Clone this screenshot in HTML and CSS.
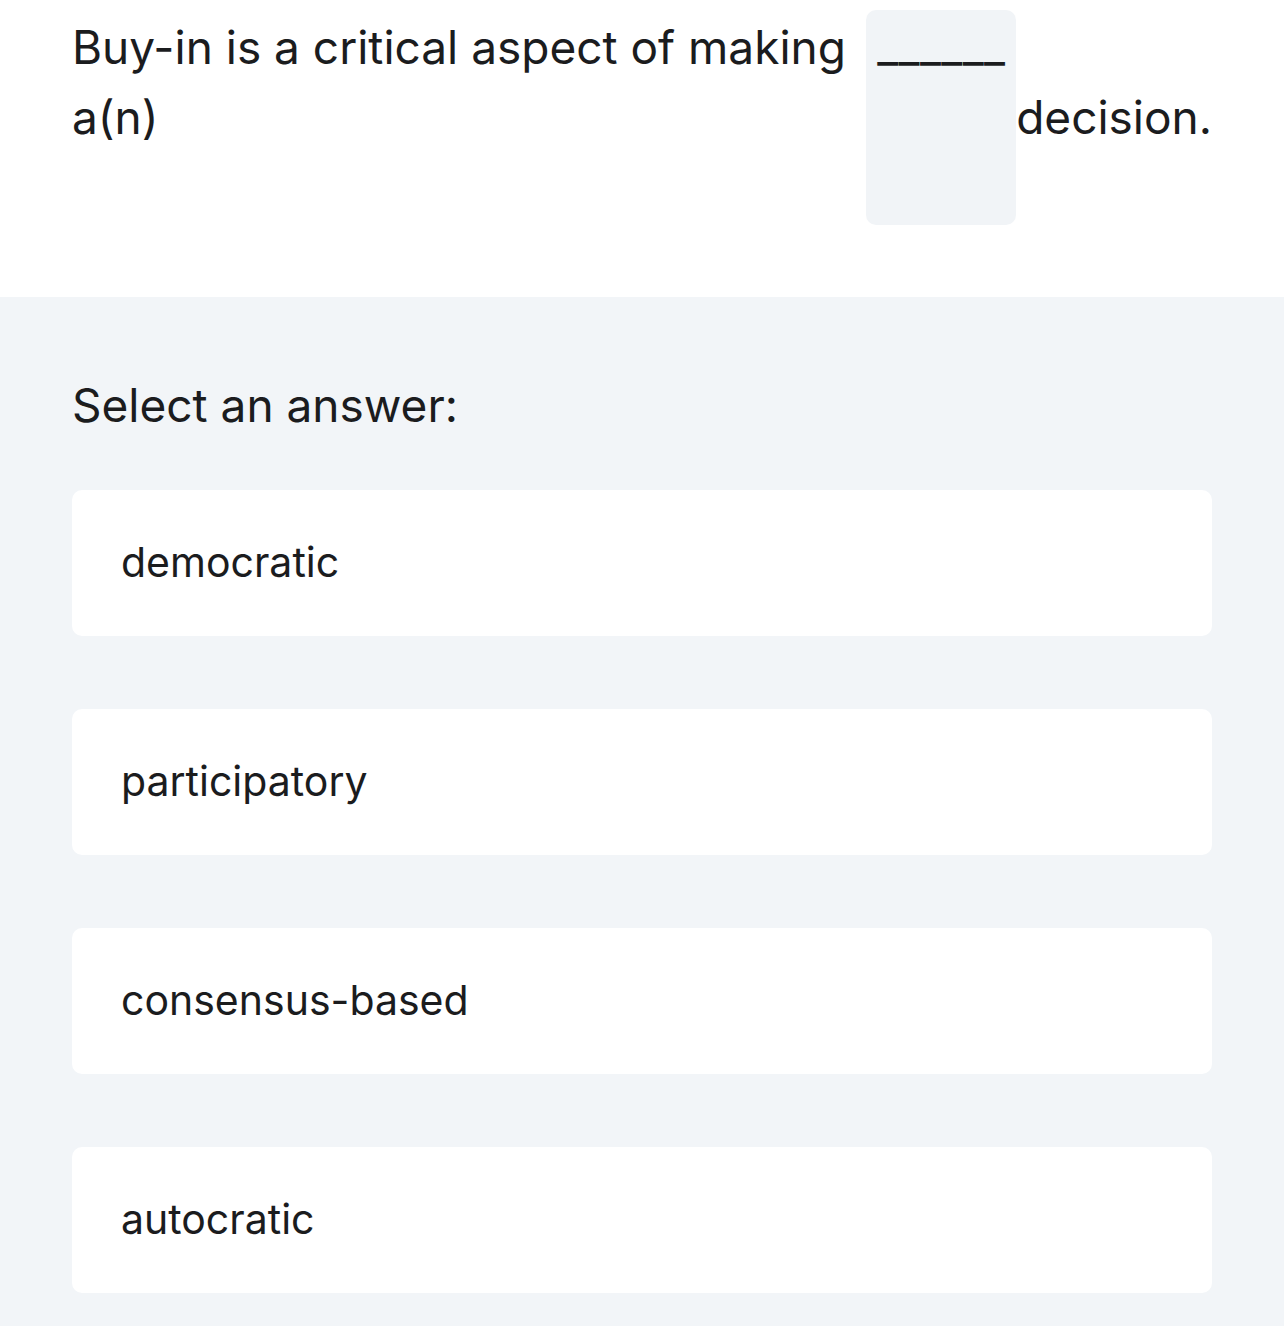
FILE: index.html
```html
<!DOCTYPE html>
<html lang="en">
<head>
<meta charset="utf-8">
<title>Question</title>
<link rel="stylesheet" href="styles.css">
</head>
<body>
<section class="question">
  <div class="prompt">
    <span class="prompt-text">Buy-in is a critical aspect of making a(n)</span>
    <span class="blank"><span class="blank-line">______</span></span>
    <span class="prompt-end">decision.</span>
  </div>
</section>
<section class="answers">
  <h2 class="answers-title">Select an answer:</h2>
  <ul class="options">
    <li class="option">democratic</li>
    <li class="option">participatory</li>
    <li class="option">consensus-based</li>
    <li class="option">autocratic</li>
  </ul>
</section>
</body>
</html>
```
FILE: styles.css
```css
html, body {
  margin: 0;
  padding: 0;
  background: #f2f5f8;
}
body {
  font-family: Inter, "Noto Sans", "Liberation Sans", sans-serif;
  color: #1b1c1e;
}
.question {
  background: #ffffff;
  height: 297px;
  box-sizing: border-box;
  padding: 12px 72px 0 72px;
}
.prompt {
  display: flex;
  align-items: flex-start;
  font-size: 46px;
  line-height: 70px;
}
.prompt-text {
  flex: 1;
  padding-right: 6px;
}
.blank {
  width: 150px;
  height: 215px;
  box-sizing: border-box;
  margin-top: -2px;
  padding: 0 11px;
  background: #f1f4f7;
  border-radius: 10px;
  overflow: hidden;
}
.blank-line {
  display: block;
  letter-spacing: 0.4px;
  white-space: nowrap;
}
.prompt-end {
  margin-top: 70px;
  margin-left: 0;
}
.answers {
  padding: 80px 72px 40px;
}
.answers-title {
  margin: 0 0 57px;
  font-size: 46px;
  font-weight: 400;
  line-height: 56px;
}
.options {
  list-style: none;
  margin: 0;
  padding: 0;
  display: flex;
  flex-direction: column;
  gap: 73px;
}
.option {
  background: #ffffff;
  border-radius: 10px;
  height: 146px;
  box-sizing: border-box;
  padding: 0 49px 2px;
  display: flex;
  align-items: center;
  font-size: 41px;
}
```
